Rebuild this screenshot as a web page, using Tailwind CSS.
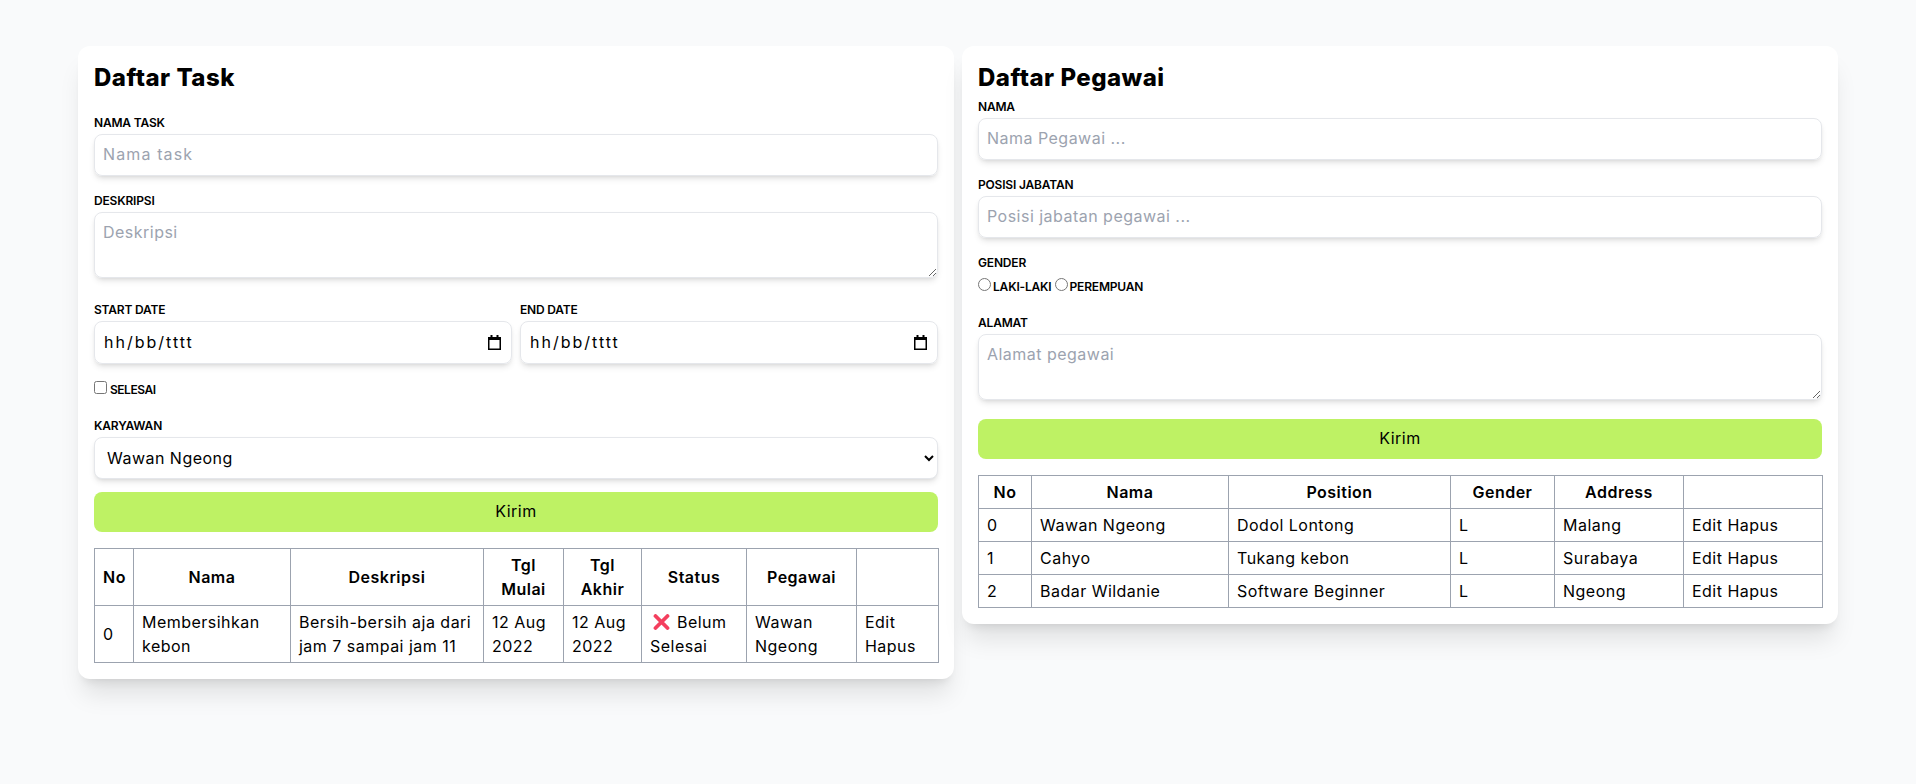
<!DOCTYPE html>
<html>
<head>
<meta charset="utf-8">
<script src="https://cdn.jsdelivr.net/npm/@tailwindcss/browser@4"></script>
</head>
<body class="bg-gray-50 font-['Inter',sans-serif] text-black tracking-[0.03em]">
<main class="w-[1760px] mx-auto pt-[46px] grid grid-cols-2 gap-2 items-start h-[784px]">
  <section class="bg-white rounded-xl shadow-xl p-4">
    <h2 class="text-2xl font-extrabold leading-8 tracking-[0.02em]">Daftar Task</h2>
    <label class="block text-xs font-semibold uppercase leading-4 tracking-[-0.015em] mt-[21px] mb-[3px]">Nama task</label>
    <input placeholder="Nama task" class="block w-full h-[42px] px-2 pb-[2px] tracking-[0.07em] border border-gray-200 rounded-lg shadow-md placeholder:text-[#9ca3af]">
    <label class="block text-xs font-semibold uppercase leading-4 tracking-[-0.015em] mt-[17px] mb-[3px]">Deskripsi</label>
    <textarea rows="2" placeholder="Deskripsi" class="block w-full h-[66px] px-2 pt-[7px] pb-2 border border-gray-200 rounded-lg shadow-md placeholder:text-[#9ca3af]"></textarea>
    <div class="grid grid-cols-2 gap-2 mt-6">
      <div>
        <label class="block text-xs font-semibold uppercase leading-4 tracking-[-0.015em] mb-[3px]">Start date</label>
        <div class="flex items-center justify-between h-[43px] pl-[9px] pr-[10px] border border-gray-200 rounded-lg shadow-md"><span class="tracking-[0.125em] -mt-[2px]">hh/bb/tttt</span>
          <svg width="13" height="15" viewBox="0 0 13 15"><path d="M0 2h13v13H0z M1.5 5v8.5h10V5z" fill-rule="evenodd" fill="#000"/><path d="M2.5 0h2v2h-2zM8.5 0h2v2h-2z" fill="#000"/></svg></div>
      </div>
      <div>
        <label class="block text-xs font-semibold uppercase leading-4 tracking-[-0.015em] mb-[3px]">End date</label>
        <div class="flex items-center justify-between h-[43px] pl-[9px] pr-[10px] border border-gray-200 rounded-lg shadow-md"><span class="tracking-[0.125em] -mt-[2px]">hh/bb/tttt</span>
          <svg width="13" height="15" viewBox="0 0 13 15"><path d="M0 2h13v13H0z M1.5 5v8.5h10V5z" fill-rule="evenodd" fill="#000"/><path d="M2.5 0h2v2h-2zM8.5 0h2v2h-2z" fill="#000"/></svg></div>
      </div>
    </div>
    <div class="flex items-start mt-[17px] h-[16px]">
      <input type="checkbox" class="m-0 w-[13px] h-[13px]">
      <label class="text-xs font-semibold uppercase leading-4 tracking-[-0.04em] ml-[3px] mt-[1px]">Selesai</label>
    </div>
    <label class="block text-xs font-semibold uppercase leading-4 tracking-[-0.015em] mt-[21px] mb-[3px]">Karyawan</label>
    <select class="block w-full h-[42px] px-2 border border-gray-200 rounded-lg shadow-md bg-white"><option>Wawan Ngeong</option></select>
    <button class="block w-full h-10 pb-[2px] mt-[13px] bg-[#bef264] rounded-lg text-center">Kirim</button>
    <table class="w-full table-fixed border-collapse mt-4 border border-[#9ca3af]">
      <colgroup><col class="w-[39px]"><col class="w-[157px]"><col class="w-[193px]"><col class="w-[80px]"><col class="w-[78px]"><col class="w-[105px]"><col class="w-[110px]"><col class="w-[82px]"></colgroup>
      <thead><tr>
        <th class="border border-[#9ca3af] px-2 py-1 font-semibold">No</th>
        <th class="border border-[#9ca3af] px-2 py-1 font-semibold">Nama</th>
        <th class="border border-[#9ca3af] px-2 py-1 font-semibold">Deskripsi</th>
        <th class="border border-[#9ca3af] px-2 py-1 font-semibold">Tgl Mulai</th>
        <th class="border border-[#9ca3af] px-2 py-1 font-semibold">Tgl Akhir</th>
        <th class="border border-[#9ca3af] px-2 py-1 font-semibold">Status</th>
        <th class="border border-[#9ca3af] px-2 py-1 font-semibold">Pegawai</th>
        <th class="border border-[#9ca3af] px-2 py-1 font-semibold"></th>
      </tr></thead>
      <tbody><tr>
        <td class="border border-[#9ca3af] px-2 py-1">0</td>
        <td class="border border-[#9ca3af] px-2 py-1">Membersihkan kebon</td>
        <td class="border border-[#9ca3af] px-2 py-1">Bersih-bersih aja dari jam 7 sampai jam 11</td>
        <td class="border border-[#9ca3af] px-2 py-1">12 Aug 2022</td>
        <td class="border border-[#9ca3af] px-2 py-1">12 Aug 2022</td>
        <td class="border border-[#9ca3af] px-2 py-1"><svg class="inline-block ml-[3px] mr-[7px] -mt-[3px]" width="17" height="16" viewBox="0 0 17 16"><path d="M2.5 2L14.5 14M14.5 2L2.5 14" stroke="#f43f5e" stroke-width="3.8" stroke-linecap="round"/></svg>Belum Selesai</td>
        <td class="border border-[#9ca3af] px-2 py-1">Wawan Ngeong</td>
        <td class="border border-[#9ca3af] px-2 py-1">Edit Hapus</td>
      </tr></tbody>
    </table>
  </section>
  <section class="bg-white rounded-xl shadow-xl p-4">
    <h2 class="text-2xl font-extrabold leading-8 tracking-[0.02em]">Daftar Pegawai</h2>
    <label class="block text-xs font-semibold uppercase leading-4 tracking-[-0.015em] mt-[5px] mb-[3px]">Nama</label>
    <input placeholder="Nama Pegawai ..." class="block w-full h-[42px] px-2 pb-[2px] border border-gray-200 rounded-lg shadow-md placeholder:text-[#9ca3af]">
    <label class="block text-xs font-semibold uppercase leading-4 tracking-[-0.015em] mt-[17px] mb-[3px]">Posisi jabatan</label>
    <input placeholder="Posisi jabatan pegawai ..." class="block w-full h-[42px] px-2 pb-[2px] border border-gray-200 rounded-lg shadow-md placeholder:text-[#9ca3af]">
    <label class="block text-xs font-semibold uppercase leading-4 tracking-[-0.015em] mt-[17px]">Gender</label>
    <div class="flex items-start h-[16px] mt-[7px]">
      <input type="radio" class="m-0 w-[13px] h-[13px]"><label class="text-xs font-semibold uppercase leading-4 tracking-[-0.015em] ml-[2px] mt-[1px] mr-[3px]">Laki-laki</label>
      <input type="radio" class="m-0 w-[13px] h-[13px]"><label class="text-xs font-semibold uppercase leading-4 tracking-[-0.015em] ml-[2px] mt-[1px]">Perempuan</label>
    </div>
    <label class="block text-xs font-semibold uppercase leading-4 tracking-[-0.015em] mt-[21px] mb-[3px]">Alamat</label>
    <textarea rows="2" placeholder="Alamat pegawai" class="block w-full h-[66px] px-2 pt-[7px] pb-2 border border-gray-200 rounded-lg shadow-md placeholder:text-[#9ca3af]"></textarea>
    <button class="block w-full h-10 pb-[2px] mt-[19px] bg-[#bef264] rounded-lg text-center">Kirim</button>
    <table class="w-full table-fixed border-collapse mt-4 border border-[#9ca3af]">
      <colgroup><col class="w-[53px]"><col class="w-[197px]"><col class="w-[222px]"><col class="w-[104px]"><col class="w-[129px]"><col class="w-[139px]"></colgroup>
      <thead><tr>
        <th class="border border-[#9ca3af] px-2 py-1 font-semibold">No</th>
        <th class="border border-[#9ca3af] px-2 py-1 font-semibold">Nama</th>
        <th class="border border-[#9ca3af] px-2 py-1 font-semibold">Position</th>
        <th class="border border-[#9ca3af] px-2 py-1 font-semibold">Gender</th>
        <th class="border border-[#9ca3af] px-2 py-1 font-semibold">Address</th>
        <th class="border border-[#9ca3af] px-2 py-1 font-semibold"></th>
      </tr></thead>
      <tbody>
        <tr><td class="border border-[#9ca3af] px-2 py-1">0</td><td class="border border-[#9ca3af] px-2 py-1">Wawan Ngeong</td><td class="border border-[#9ca3af] px-2 py-1">Dodol Lontong</td><td class="border border-[#9ca3af] px-2 py-1">L</td><td class="border border-[#9ca3af] px-2 py-1">Malang</td><td class="border border-[#9ca3af] px-2 py-1">Edit Hapus</td></tr>
        <tr><td class="border border-[#9ca3af] px-2 py-1">1</td><td class="border border-[#9ca3af] px-2 py-1">Cahyo</td><td class="border border-[#9ca3af] px-2 py-1">Tukang kebon</td><td class="border border-[#9ca3af] px-2 py-1">L</td><td class="border border-[#9ca3af] px-2 py-1">Surabaya</td><td class="border border-[#9ca3af] px-2 py-1">Edit Hapus</td></tr>
        <tr><td class="border border-[#9ca3af] px-2 py-1">2</td><td class="border border-[#9ca3af] px-2 py-1">Badar Wildanie</td><td class="border border-[#9ca3af] px-2 py-1">Software Beginner</td><td class="border border-[#9ca3af] px-2 py-1">L</td><td class="border border-[#9ca3af] px-2 py-1">Ngeong</td><td class="border border-[#9ca3af] px-2 py-1">Edit Hapus</td></tr>
      </tbody>
    </table>
  </section>
</main>
</body>
</html>
